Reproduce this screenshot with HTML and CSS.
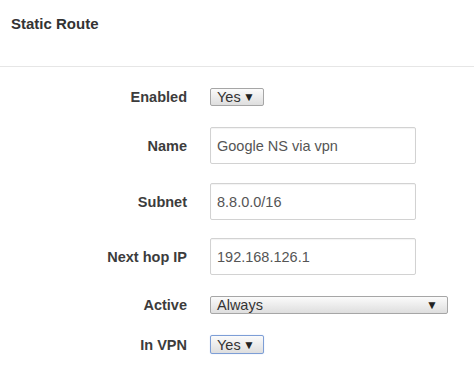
FILE: index.html
```html
<!DOCTYPE html>
<html>
<head>
<meta charset="utf-8">
<link rel="stylesheet" href="styles.css">
</head>
<body>
<div class="header">Static Route</div>
<div class="form">
  <div class="row row-sel r1">
    <div class="label">Enabled</div>
    <div class="select small"><span>Yes</span><span class="arrow">▼</span></div>
  </div>
  <div class="row r2">
    <div class="label">Name</div>
    <div class="input">Google NS via vpn</div>
  </div>
  <div class="row r3">
    <div class="label">Subnet</div>
    <div class="input">8.8.0.0/16</div>
  </div>
  <div class="row r4">
    <div class="label">Next hop IP</div>
    <div class="input">192.168.126.1</div>
  </div>
  <div class="row row-sel r5">
    <div class="label">Active</div>
    <div class="select wide"><span>Always</span><span class="arrow">▼</span></div>
  </div>
  <div class="row row-sel r6">
    <div class="label">In VPN</div>
    <div class="select small focus"><span>Yes</span><span class="arrow">▼</span></div>
  </div>
</div>
</body>
</html>
```
FILE: styles.css
```css
html, body {
  margin: 0;
  padding: 0;
  background: #ffffff;
}
body {
  font-family: "Liberation Sans", Arial, sans-serif;
  width: 474px;
  height: 386px;
  overflow: hidden;
}
.header {
  box-sizing: border-box;
  height: 67px;
  padding: 15px 0 0 11px;
  font-size: 15px;
  line-height: 18px;
  font-weight: bold;
  color: #333333;
  border-bottom: 1px solid #e6e6e6;
}
.form {
  display: flex;
  flex-direction: column;
  padding-top: 21px;
}
.row {
  display: flex;
  align-items: center;
}
.r1 { margin-bottom: 21px; }
.r2 { margin-bottom: 19px; }
.r3 { margin-bottom: 18px; }
.r4 { margin-bottom: 21px; }
.r5 { margin-bottom: 21px; }
.label {
  width: 187px;
  margin-right: 23px;
  text-align: right;
  font-size: 14.5px;
  font-weight: bold;
  color: #3c3c3c;
}
.input {
  box-sizing: border-box;
  width: 206px;
  height: 37px;
  border: 1px solid #d2d2d2;
  border-radius: 2px;
  box-shadow: inset 0 1px 1px rgba(0,0,0,0.05);
  padding: 0 6px;
  display: flex;
  align-items: center;
  font-size: 14.5px;
  color: #555555;
}
.select {
  box-sizing: border-box;
  height: 18px;
  border: 1px solid #a6a6a6;
  border-radius: 2px;
  background: linear-gradient(#fbfbfb, #dedede);
  display: flex;
  align-items: center;
  justify-content: space-between;
  padding: 0 8px 0 6px;
  font-size: 14.5px;
  line-height: 16px;
  color: #333333;
}
.select.small { width: 54px; }
.select.wide { width: 238px; padding-right: 9px; }
.select.focus {
  height: 19px;
  border-color: #7d9ed6;
  box-shadow: 0 0 1px #a9c1ea;
}
.arrow {
  font-size: 12px;
  color: #222222;
}
```
